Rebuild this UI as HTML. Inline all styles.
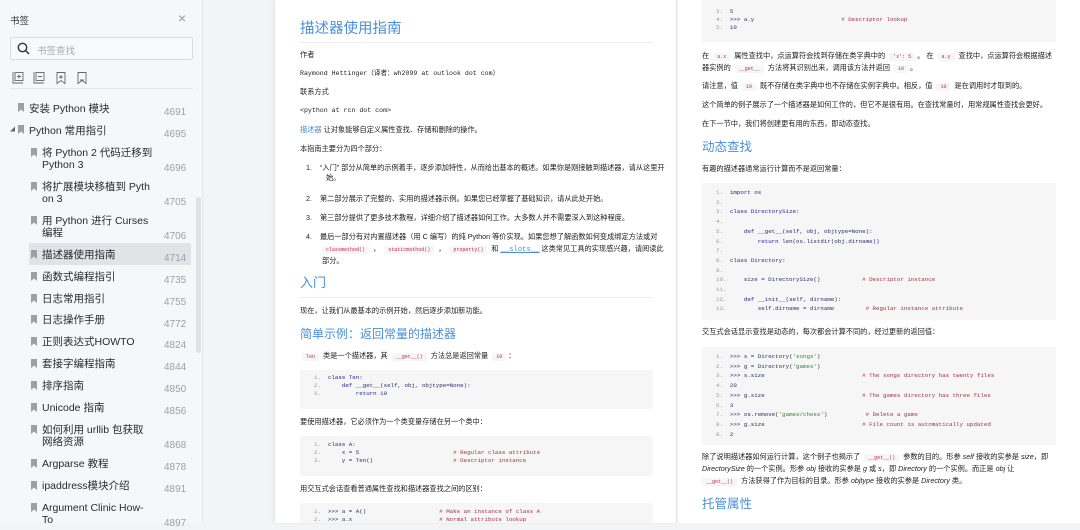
<!DOCTYPE html>
<html><head><meta charset="utf-8">
<style>
*{margin:0;padding:0;box-sizing:border-box}
body{width:1080px;height:523px;overflow:hidden;position:relative;background:#f3f4f6;font-family:"Liberation Sans","Noto Sans CJK SC",sans-serif;color:#333}
.a{position:absolute;white-space:nowrap}
#side{position:absolute;left:0;top:0;width:203px;height:523px;background:#f6f7f9;border-right:1px solid #e3e5e8}
.it{font-size:10.5px;line-height:12px;color:#2a2a2a;margin-top:2px}
.n{font-size:10px;line-height:12px;color:#9ba1ab;left:164px;margin-top:1px}
.bm{position:absolute;width:6px;height:9px;background:#9aa0a8;clip-path:polygon(0 0,100% 0,100% 100%,50% 72%,0 100%)}
.pg{position:absolute;top:0;height:523px;background:#fff}
.t{font-size:7.2px;line-height:10px;color:#222}
.h{color:#4a8fd6}
.cb{position:absolute;background:#f6f6f6}
.c{font-family:"Liberation Mono",monospace;font-size:5.8px;line-height:8px;color:#2a2a6a}
.ln{color:#999}
.cm{color:#a0304a}
.kw{color:#1c1c8a}
.s{color:#2a8a2a}
.ic{font-family:"Liberation Mono",monospace;font-size:5px;color:#c7254e;background:#f6f6f6;padding:1px 4px;border-radius:2px}
.hr{position:absolute;height:1px;background:#eee}
</style></head><body>
<div id="side">
<div class="a" style="left:10px;top:13px;font-size:9.5px;color:#333">书签</div>
<div class="a" style="left:178px;top:10px;font-size:14px;color:#999;line-height:16px">×</div>
<div class="a" style="left:10px;top:37px;width:183px;height:23px;border:1px solid #d8dbe0;border-radius:2px;background:#f8f9fa"></div>
<svg class="a" style="left:17px;top:42px" width="13" height="13" viewBox="0 0 13 13"><circle cx="5.5" cy="5.5" r="4.2" fill="none" stroke="#333" stroke-width="1.4"/><path d="M8.6 8.6L12 12" stroke="#333" stroke-width="1.5"/></svg>
<div class="a" style="left:37px;top:43px;font-size:9.5px;color:#aaa">书签查找</div>
<svg class="a" style="left:12px;top:71px" width="80" height="14" viewBox="0 0 80 14" fill="none" stroke="#666" stroke-width="0.9">
<rect x="3" y="1.5" width="8" height="8"/><path d="M1 1v11h10M5 5.5h4M7 3.5v4"/>
<rect x="24" y="1.5" width="8" height="8"/><path d="M22 1v11h10M26 5.5h4"/>
<path d="M45 1.5h8v11l-4-3-4 3z M47 6h4M49 4v4"/>
<path d="M66 1.5h8v11l-4-3-4 3z M68 9h4"/>
</svg>
<div class="hr" style="left:10px;top:88px;width:183px;background:#e2e4e8"></div>
<div class="a" style="left:29px;top:243px;width:162px;height:22px;background:#e0e3e8"></div>
<div class="a" style="left:196px;top:197px;width:5px;height:156px;background:#e0e2e6;border-radius:3px"></div>

<div class="bm" style="left:18px;top:103px"></div><div class="a it" style="left:29px;top:101px">安装 Python 模块</div><div class="a n" style="top:106px">4691</div>
<div class="a" style="left:10px;top:126px;font-size:5px;color:#666">◢</div>
<div class="bm" style="left:18px;top:125px"></div><div class="a it" style="left:29px;top:123px">Python 常用指引</div><div class="a n" style="top:128px">4695</div>
<div class="bm" style="left:31px;top:148px"></div><div class="a it" style="left:42px;top:145px">将 Python 2 代码迁移到<br>Python 3</div><div class="a n" style="top:162px">4696</div>
<div class="bm" style="left:31px;top:182px"></div><div class="a it" style="left:42px;top:179px">将扩展模块移植到 Pyth<br>on 3</div><div class="a n" style="top:196px">4705</div>
<div class="bm" style="left:31px;top:216px"></div><div class="a it" style="left:42px;top:213px">用 Python 进行 Curses<br>编程</div><div class="a n" style="top:230px">4706</div>
<div class="bm" style="left:31px;top:250px"></div><div class="a it" style="left:42px;top:247px">描述器使用指南</div><div class="a n" style="top:252px">4714</div>
<div class="bm" style="left:31px;top:272px"></div><div class="a it" style="left:42px;top:269px">函数式编程指引</div><div class="a n" style="top:274px">4735</div>
<div class="bm" style="left:31px;top:294px"></div><div class="a it" style="left:42px;top:291px">日志常用指引</div><div class="a n" style="top:296px">4755</div>
<div class="bm" style="left:31px;top:315px"></div><div class="a it" style="left:42px;top:312px">日志操作手册</div><div class="a n" style="top:318px">4772</div>
<div class="bm" style="left:31px;top:337px"></div><div class="a it" style="left:42px;top:334px">正则表达式HOWTO</div><div class="a n" style="top:339px">4824</div>
<div class="bm" style="left:31px;top:359px"></div><div class="a it" style="left:42px;top:356px">套接字编程指南</div><div class="a n" style="top:361px">4844</div>
<div class="bm" style="left:31px;top:381px"></div><div class="a it" style="left:42px;top:378px">排序指南</div><div class="a n" style="top:383px">4850</div>
<div class="bm" style="left:31px;top:403px"></div><div class="a it" style="left:42px;top:400px">Unicode 指南</div><div class="a n" style="top:405px">4856</div>
<div class="bm" style="left:31px;top:425px"></div><div class="a it" style="left:42px;top:422px">如何利用 urllib 包获取<br>网络资源</div><div class="a n" style="top:439px">4868</div>
<div class="bm" style="left:31px;top:459px"></div><div class="a it" style="left:42px;top:456px">Argparse 教程</div><div class="a n" style="top:461px">4878</div>
<div class="bm" style="left:31px;top:481px"></div><div class="a it" style="left:42px;top:478px">ipaddress模块介绍</div><div class="a n" style="top:483px">4891</div>
<div class="bm" style="left:31px;top:503px"></div><div class="a it" style="left:42px;top:500px">Argument Clinic How-<br>To</div><div class="a n" style="top:517px">4897</div>
</div>

<div class="pg" style="left:275px;width:402px;box-shadow:-2px 0 3px rgba(0,0,0,0.06);border-right:1px solid #e4e4e4"></div>
<div class="pg" style="left:678px;width:402px"></div>

<!-- page 1 -->
<div class="a h" style="left:300px;top:19px;font-size:14.5px;line-height:20px">描述器使用指南</div>
<div class="hr" style="left:300px;top:42px;width:353px"></div>
<div class="a t" style="left:300px;top:50px">作者</div>
<div class="a t" style="left:300px;top:69px;font-family:'Liberation Mono','Noto Sans CJK SC',monospace;font-size:6.6px">Raymond Hettinger（译者：wh2099 at outlook dot com）</div>
<div class="a t" style="left:300px;top:87px">联系方式</div>
<div class="a t" style="left:300px;top:106px;font-family:'Liberation Mono',monospace;font-size:6.6px">&lt;python at rcn dot com&gt;</div>
<div class="a t" style="left:300px;top:125px"><span class="h">描述器</span> 让对象能够自定义属性查找、存储和删除的操作。</div>
<div class="a t" style="left:300px;top:144px">本指南主要分为四个部分：</div>
<div class="a t" style="left:306px;top:163px">1.&nbsp;&nbsp;&nbsp;&nbsp;“入门” 部分从简单的示例着手，逐步添加特性，从而给出基本的概述。如果你是刚接触到描述器，请从这里开<br>&nbsp;&nbsp;&nbsp;&nbsp;&nbsp;&nbsp;&nbsp;&nbsp;&nbsp;&nbsp;始。</div>
<div class="a t" style="left:306px;top:194px">2.&nbsp;&nbsp;&nbsp;&nbsp;第二部分展示了完整的、实用的描述器示例。如果您已经掌握了基础知识，请从此处开始。</div>
<div class="a t" style="left:306px;top:213px">3.&nbsp;&nbsp;&nbsp;&nbsp;第三部分提供了更多技术教程，详细介绍了描述器如何工作。大多数人并不需要深入到这种程度。</div>
<div class="a t" style="left:306px;top:232px">4.&nbsp;&nbsp;&nbsp;&nbsp;最后一部分有对内置描述器（用 C 编写）的纯 Python 等价实现。如果您想了解函数如何变成绑定方法或对</div>
<div class="a t" style="left:322px;top:244px"><span class="ic">classmethod()</span>&nbsp;&nbsp;，&nbsp;&nbsp;<span class="ic">staticmethod()</span>&nbsp;&nbsp;，&nbsp;&nbsp;<span class="ic">property()</span>&nbsp;&nbsp;和 <span class="h" style="font-family:'Liberation Mono';text-decoration:underline">__slots__</span> 这类常见工具的实现感兴趣，请阅读此</div>
<div class="a t" style="left:322px;top:256px">部分。</div>

<div class="a h" style="left:300px;top:274px;font-size:13px;line-height:18px">入门</div>
<div class="hr" style="left:300px;top:297px;width:353px"></div>
<div class="a t" style="left:300px;top:306px">现在，让我们从最基本的示例开始，然后逐步添加新功能。</div>
<div class="a h" style="left:300px;top:325px;font-size:12px;line-height:18px">简单示例：返回常量的描述器</div>
<div class="a t" style="left:302px;top:351px"><span class="ic">Ten</span>&nbsp;&nbsp;类是一个描述器，其&nbsp;&nbsp;<span class="ic">__get__()</span>&nbsp;&nbsp;方法总是返回常量&nbsp;&nbsp;<span class="ic">10</span>&nbsp;：</div>
<div class="cb" style="left:300px;top:370px;width:353px;height:39px"></div>
<div class="a c" style="left:314px;top:374px"><span class="ln">1.</span>&nbsp;&nbsp;<span class="kw">class Ten:</span><br><span class="ln">2.</span>&nbsp;&nbsp;&nbsp;&nbsp;&nbsp;&nbsp;<span class="kw">def</span> __get__(self, obj, objtype=None):<br><span class="ln">3.</span>&nbsp;&nbsp;&nbsp;&nbsp;&nbsp;&nbsp;&nbsp;&nbsp;&nbsp;&nbsp;<span class="kw">return</span> 10</div>
<div class="a t" style="left:300px;top:417px">要使用描述器，它必须作为一个类变量存储在另一个类中：</div>
<div class="cb" style="left:300px;top:436px;width:353px;height:40px"></div>
<div class="a c" style="left:314px;top:441px"><span class="ln">1.</span>&nbsp;&nbsp;<span class="kw">class A:</span><br><span class="ln">2.</span>&nbsp;&nbsp;&nbsp;&nbsp;&nbsp;&nbsp;x = 5&nbsp;&nbsp;&nbsp;&nbsp;&nbsp;&nbsp;&nbsp;&nbsp;&nbsp;&nbsp;&nbsp;&nbsp;&nbsp;&nbsp;&nbsp;&nbsp;&nbsp;&nbsp;&nbsp;&nbsp;&nbsp;&nbsp;&nbsp;&nbsp;&nbsp;&nbsp;&nbsp;<span class="cm"># Regular class attribute</span><br><span class="ln">3.</span>&nbsp;&nbsp;&nbsp;&nbsp;&nbsp;&nbsp;y = Ten()&nbsp;&nbsp;&nbsp;&nbsp;&nbsp;&nbsp;&nbsp;&nbsp;&nbsp;&nbsp;&nbsp;&nbsp;&nbsp;&nbsp;&nbsp;&nbsp;&nbsp;&nbsp;&nbsp;&nbsp;&nbsp;&nbsp;&nbsp;<span class="cm"># Descriptor instance</span></div>
<div class="a t" style="left:300px;top:484px">用交互式会话查看普通属性查找和描述器查找之间的区别：</div>
<div class="cb" style="left:300px;top:503px;width:353px;height:20px"></div>
<div class="a c" style="left:314px;top:508px"><span class="ln">1.</span>&nbsp;&nbsp;&gt;&gt;&gt; a = A()&nbsp;&nbsp;&nbsp;&nbsp;&nbsp;&nbsp;&nbsp;&nbsp;&nbsp;&nbsp;&nbsp;&nbsp;&nbsp;&nbsp;&nbsp;&nbsp;&nbsp;&nbsp;&nbsp;&nbsp;&nbsp;<span class="cm"># Make an instance of class A</span><br><span class="ln">2.</span>&nbsp;&nbsp;&gt;&gt;&gt; a.x&nbsp;&nbsp;&nbsp;&nbsp;&nbsp;&nbsp;&nbsp;&nbsp;&nbsp;&nbsp;&nbsp;&nbsp;&nbsp;&nbsp;&nbsp;&nbsp;&nbsp;&nbsp;&nbsp;&nbsp;&nbsp;&nbsp;&nbsp;&nbsp;&nbsp;<span class="cm"># Normal attribute lookup</span></div>

<!-- page 2 -->
<div class="cb" style="left:702px;top:0px;width:354px;height:42px"></div>
<div class="a c" style="left:716px;top:8px"><span class="ln">3.</span>&nbsp;&nbsp;5<br><span class="ln">4.</span>&nbsp;&nbsp;&gt;&gt;&gt; a.y&nbsp;&nbsp;&nbsp;&nbsp;&nbsp;&nbsp;&nbsp;&nbsp;&nbsp;&nbsp;&nbsp;&nbsp;&nbsp;&nbsp;&nbsp;&nbsp;&nbsp;&nbsp;&nbsp;&nbsp;&nbsp;&nbsp;&nbsp;&nbsp;&nbsp;<span class="cm"># Descriptor lookup</span><br><span class="ln">5.</span>&nbsp;&nbsp;10</div>
<div class="a t" style="left:702px;top:51px">在&nbsp;&nbsp;<span class="ic">a.x</span>&nbsp;&nbsp;属性查找中，点运算符会找到存储在类字典中的&nbsp;&nbsp;<span class="ic">'x': 5</span>&nbsp;。&nbsp;在&nbsp;&nbsp;<span class="ic">a.y</span>&nbsp;&nbsp;查找中，点运算符会根据描述</div>
<div class="a t" style="left:702px;top:63px">器实例的&nbsp;&nbsp;<span class="ic">__get__</span>&nbsp;&nbsp;方法将其识别出来，调用该方法并返回&nbsp;&nbsp;<span class="ic">10</span>&nbsp;。</div>
<div class="a t" style="left:702px;top:81px">请注意，值&nbsp;&nbsp;<span class="ic">10</span>&nbsp;&nbsp;既不存储在类字典中也不存储在实例字典中。相反，值&nbsp;&nbsp;<span class="ic">10</span>&nbsp;&nbsp;是在调用时才取到的。</div>
<div class="a t" style="left:702px;top:100px">这个简单的例子展示了一个描述器是如何工作的，但它不是很有用。在查找常量时，用常规属性查找会更好。</div>
<div class="a t" style="left:702px;top:119px">在下一节中，我们将创建更有用的东西，即动态查找。</div>
<div class="a h" style="left:702px;top:138px;font-size:12.5px;line-height:18px">动态查找</div>
<div class="a t" style="left:702px;top:164px">有趣的描述器通常运行计算而不是返回常量：</div>
<div class="cb" style="left:702px;top:183px;width:354px;height:137px"></div>
<div class="a c" style="left:716px;top:188px;line-height:9.7px"><span class="ln">1.</span>&nbsp;&nbsp;<span class="kw">import os</span><br><span class="ln">2.</span><br><span class="ln">3.</span>&nbsp;&nbsp;<span class="kw">class DirectorySize:</span><br><span class="ln">4.</span><br><span class="ln">5.</span>&nbsp;&nbsp;&nbsp;&nbsp;&nbsp;&nbsp;<span class="kw">def</span> __get__(self, obj, objtype=None):<br><span class="ln">6.</span>&nbsp;&nbsp;&nbsp;&nbsp;&nbsp;&nbsp;&nbsp;&nbsp;&nbsp;&nbsp;<span class="kw">return</span> len(os.listdir(obj.dirname))<br><span class="ln">7.</span><br><span class="ln">8.</span>&nbsp;&nbsp;<span class="kw">class Directory:</span><br><span class="ln">9.</span><br><span class="ln">10.</span>&nbsp;&nbsp;&nbsp;&nbsp;&nbsp;size = DirectorySize()&nbsp;&nbsp;&nbsp;&nbsp;&nbsp;&nbsp;&nbsp;&nbsp;&nbsp;&nbsp;&nbsp;&nbsp;<span class="cm"># Descriptor instance</span><br><span class="ln">11.</span><br><span class="ln">12.</span>&nbsp;&nbsp;&nbsp;&nbsp;&nbsp;<span class="kw">def</span> __init__(self, dirname):<br><span class="ln">13.</span>&nbsp;&nbsp;&nbsp;&nbsp;&nbsp;&nbsp;&nbsp;&nbsp;&nbsp;self.dirname = dirname&nbsp;&nbsp;&nbsp;&nbsp;&nbsp;&nbsp;&nbsp;&nbsp;&nbsp;<span class="cm"># Regular instance attribute</span></div>
<div class="a t" style="left:702px;top:327px">交互式会话显示查找是动态的，每次都会计算不同的，经过更新的返回值：</div>
<div class="cb" style="left:702px;top:347px;width:354px;height:98px"></div>
<div class="a c" style="left:716px;top:352px;line-height:9.7px"><span class="ln">1.</span>&nbsp;&nbsp;&gt;&gt;&gt; s = Directory(<span class="s">'songs'</span>)<br><span class="ln">2.</span>&nbsp;&nbsp;&gt;&gt;&gt; g = Directory(<span class="s">'games'</span>)<br><span class="ln">3.</span>&nbsp;&nbsp;&gt;&gt;&gt; s.size&nbsp;&nbsp;&nbsp;&nbsp;&nbsp;&nbsp;&nbsp;&nbsp;&nbsp;&nbsp;&nbsp;&nbsp;&nbsp;&nbsp;&nbsp;&nbsp;&nbsp;&nbsp;&nbsp;&nbsp;&nbsp;&nbsp;&nbsp;&nbsp;&nbsp;&nbsp;&nbsp;&nbsp;<span class="cm"># The songs directory has twenty files</span><br><span class="ln">4.</span>&nbsp;&nbsp;20<br><span class="ln">5.</span>&nbsp;&nbsp;&gt;&gt;&gt; g.size&nbsp;&nbsp;&nbsp;&nbsp;&nbsp;&nbsp;&nbsp;&nbsp;&nbsp;&nbsp;&nbsp;&nbsp;&nbsp;&nbsp;&nbsp;&nbsp;&nbsp;&nbsp;&nbsp;&nbsp;&nbsp;&nbsp;&nbsp;&nbsp;&nbsp;&nbsp;&nbsp;&nbsp;<span class="cm"># The games directory has three files</span><br><span class="ln">6.</span>&nbsp;&nbsp;3<br><span class="ln">7.</span>&nbsp;&nbsp;&gt;&gt;&gt; os.remove(<span class="s">'games/chess'</span>)&nbsp;&nbsp;&nbsp;&nbsp;&nbsp;&nbsp;&nbsp;&nbsp;&nbsp;&nbsp;&nbsp;<span class="cm"># Delete a game</span><br><span class="ln">8.</span>&nbsp;&nbsp;&gt;&gt;&gt; g.size&nbsp;&nbsp;&nbsp;&nbsp;&nbsp;&nbsp;&nbsp;&nbsp;&nbsp;&nbsp;&nbsp;&nbsp;&nbsp;&nbsp;&nbsp;&nbsp;&nbsp;&nbsp;&nbsp;&nbsp;&nbsp;&nbsp;&nbsp;&nbsp;&nbsp;&nbsp;&nbsp;&nbsp;<span class="cm"># File count is automatically updated</span><br><span class="ln">9.</span>&nbsp;&nbsp;2</div>
<div class="a t" style="left:702px;top:452px">除了说明描述器如何运行计算，这个例子也揭示了&nbsp;&nbsp;<span class="ic">__get__()</span>&nbsp;&nbsp;参数的目的。形参 <i>self</i> 接收的实参是 <i>size</i>，即</div>
<div class="a t" style="left:702px;top:464px"><i>DirectorySize</i> 的一个实例。形参 <i>obj</i> 接收的实参是 <i>g</i> 或 <i>s</i>，即 <i>Directory</i> 的一个实例。而正是 <i>obj</i> 让</div>
<div class="a t" style="left:702px;top:476px"><span class="ic">__get__()</span>&nbsp;&nbsp;方法获得了作为目标的目录。形参 <i>objtype</i> 接收的实参是 <i>Directory</i> 类。</div>
<div class="a h" style="left:702px;top:495px;font-size:12.5px;line-height:18px">托管属性</div>
</body></html>
